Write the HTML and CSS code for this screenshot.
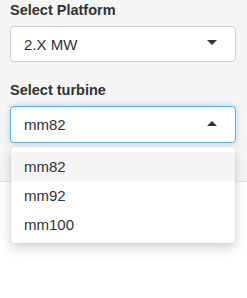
FILE: index.html
```html
<!DOCTYPE html>
<html lang="en">
<head>
    <meta charset="UTF-8">
    <title>Turbine selection</title>
    <link rel="stylesheet" href="styles.css">
</head>
<body>
    <div class="well">
        <div class="form-group">
            <label for="platform">Select Platform</label>
            <div class="select" id="platform">
                <span class="select-value">2.X MW</span>
                <span class="caret"></span>
            </div>
        </div>

        <div class="form-group">
            <label for="turbine">Select turbine</label>
            <div class="select-wrap">
                <div class="select focus" id="turbine">
                    <span class="select-value">mm82</span>
                    <span class="caret up"></span>
                </div>
                <div class="dropdown">
                    <div class="option active">mm82</div>
                    <div class="option">mm92</div>
                    <div class="option">mm100</div>
                </div>
            </div>
        </div>
    </div>
</body>
</html>
```

FILE: styles.css
```css
/* Reset */
* {
    margin: 0;
    padding: 0;
    box-sizing: border-box;
}

body {
    min-height: 100vh;
    font-family: 'Liberation Sans', Arial, sans-serif;
    font-size: 14.5px;
    color: #333;
    background: #fff;
}

/* Sidebar panel */
.well {
    background: #f5f5f5;
    border-bottom: 1px solid #e3e3e3;
    padding: 0 11px 38px 10px;
}

.form-group + .form-group {
    padding-top: 18px;
}

.form-group label {
    display: block;
    font-weight: bold;
    line-height: 20px;
    margin-bottom: 6px;
}

/* Select box */
.select-wrap {
    position: relative;
}

.select {
    display: flex;
    align-items: center;
    justify-content: space-between;
    height: 36px;
    padding: 0 18px 0 13px;
    background: #fff;
    border: 1px solid #ccc;
    border-radius: 4px;
    font-size: 15px;
}

.select.focus {
    height: 37px;
    border-color: #66afe9;
    box-shadow: inset 0 1px 1px rgba(0, 0, 0, 0.075), 0 0 6px rgba(102, 175, 233, 0.5);
}

.caret {
    width: 0;
    height: 0;
    border-left: 5px solid transparent;
    border-right: 5px solid transparent;
    border-top: 5px solid #333;
    margin-top: -3px;
}

.caret.up {
    border-top: none;
    border-bottom: 5px solid #333;
}

/* Open dropdown list */
.dropdown {
    position: absolute;
    z-index: 10;
    top: 41px;
    left: 1px;
    right: 1px;
    padding: 5px 0 4px;
    background: #fff;
    border-radius: 4px;
    box-shadow: 0 0 0 1px rgba(0, 0, 0, 0.04), 0 5px 12px rgba(0, 0, 0, 0.18);
    font-size: 15px;
}

.option {
    height: 29px;
    line-height: 29px;
    padding-left: 13px;
}

.option.active {
    background: #f5f5f5;
}
```
